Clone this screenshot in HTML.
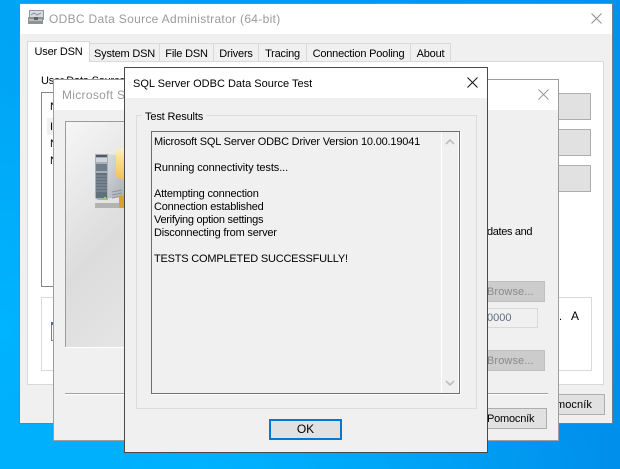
<!DOCTYPE html>
<html><head><meta charset="utf-8">
<style>
html,body{margin:0;padding:0}
body{width:620px;height:469px;overflow:hidden;position:relative;font-family:"Liberation Sans",sans-serif;font-size:11px;letter-spacing:-.2px;color:#000;
background:radial-gradient(ellipse 300px 300px at 0px 330px,#00b4ff 0%,rgba(0,176,255,0) 100%),radial-gradient(ellipse 400px 120px at 200px 469px,#00b2ff 0%,rgba(0,178,255,0) 100%),linear-gradient(100deg,#00a4f4 0%,#0090ec 100%)}
div{position:absolute;box-sizing:border-box}
.t{white-space:nowrap;line-height:13px}
.tab{background:#f0f0f0;border:1px solid #d9d9d9;border-bottom:none;height:18px;top:43px;line-height:20px;text-align:center;white-space:nowrap;color:#000}
.btn{background:#e1e1e1;border:1px solid #adadad;text-align:center;white-space:nowrap}
.cap{font-size:12px}
</style></head><body>

<!-- main window -->
<div style="left:19px;top:3px;width:594px;height:421px;background:#f0f0f0;border:1px solid #6f7f8c;border-top-color:#7a8a96"></div>
<div style="left:20px;top:4px;width:592px;height:30px;background:#fff"></div>
<svg style="position:absolute;left:28px;top:10px" width="17" height="15" viewBox="0 0 17 15"><rect x="1.500" y=".5" width="14" height="9" fill="#d5dbe2" stroke="#8b97a3"/><path d="M3 5l3-2 3 2 4-2" stroke="#8592a0" fill="none"/><rect x="0" y="7" width="15" height="7" fill="#8d9496"/><rect x="1" y="9" width="13" height="2" fill="#b7bcbe"/><rect x="6" y="7" width="4" height="3" fill="#5a6266"/></svg>
<div class="t cap" style="left:49px;top:13px;color:#9b9b9b;letter-spacing:.31px">ODBC Data Source Administrator (64-bit)</div>
<svg style="position:absolute;left:591px;top:13px" width="12" height="12"><path d="M.5.5l10 10M10.500.5l-10 10" stroke="#8e8e8e" stroke-width="1" fill="none"/></svg>

<!-- tabs -->
<div style="left:27px;top:61px;width:577px;height:324px;background:#fff;border:1px solid #d9d9d9"></div>
<div class="tab" style="left:89px;width:71px">System DSN</div>
<div class="tab" style="left:159px;width:55px">File DSN</div>
<div class="tab" style="left:213px;width:46px">Drivers</div>
<div class="tab" style="left:258px;width:49px">Tracing</div>
<div class="tab" style="left:306px;width:105px">Connection Pooling</div>
<div class="tab" style="left:410px;width:41px">About</div>
<div style="left:27px;top:41px;width:63px;height:21px;background:#fff;border:1px solid #d9d9d9;border-bottom:none;text-align:center;line-height:20px;white-space:nowrap">User DSN</div>

<div class="t" style="left:41px;top:75px">User Data Sources:</div>
<div style="left:41px;top:92px;width:30px;height:195px;background:#fff;border:1px solid #828790"></div>
<div class="t" style="left:50px;top:101px">N</div>
<div style="left:47px;top:118px;width:10px;height:17px;background:#f0f0f0"></div>
<div class="t" style="left:50px;top:121px">ID</div>
<div class="t" style="left:50px;top:138px">N</div>
<div class="t" style="left:50px;top:155px">N</div>
<div style="left:41px;top:297px;width:30px;height:74px;background:#fff;border:1px solid #d9d9d9"></div>
<div style="left:51px;top:322px;width:5px;height:19px;background:#fff;border:1px solid #808080;border-right:none"></div>
<div style="left:51px;top:322px;width:4px;height:3px;background:#4a6fa5"></div>

<div class="btn" style="left:540px;top:93px;width:51px;height:27px"></div>
<div class="btn" style="left:540px;top:129px;width:51px;height:27px"></div>
<div class="btn" style="left:540px;top:165px;width:51px;height:27px"></div>
<div style="left:540px;top:297px;width:52px;height:74px;background:#fff;border:1px solid #d9d9d9;border-left:none"></div>
<div class="t" style="left:559px;top:311px">.</div>
<div class="t" style="left:571px;top:310px;font-size:12px">A</div>
<div class="btn" style="left:540px;top:394px;width:65px;height:21px;line-height:21px;text-align:right;padding-right:12px;letter-spacing:.1px">mocník</div>

<!-- middle window -->
<div style="left:53px;top:79px;width:506px;height:362px;background:#f0f0f0;border:1px solid #9d9d9d"></div>
<div style="left:54px;top:80px;width:504px;height:30px;background:#fff"></div>
<div class="t cap" style="left:62px;top:89px;color:#9b9b9b;letter-spacing:.3px">Microsoft SQL</div>
<svg style="position:absolute;left:538px;top:89px" width="12" height="12"><path d="M.5.5l10 10M10.500.5l-10 10" stroke="#9a9a9a" stroke-width="1" fill="none"/></svg>
<div style="left:65px;top:121px;width:70px;height:226px;background:linear-gradient(135deg,#f6f6f6 0%,#dcdcdc 55%,#e6e6e6 100%);border-left:1px solid #9b9b9b;border-top:1px solid #9b9b9b"></div>
<div style="left:65px;top:347px;width:70px;height:1px;background:#fff"></div>
<svg style="position:absolute;left:94px;top:148px" width="32" height="62" viewBox="0 0 32 62">
<defs><linearGradient id="s" x1="0" y1="0" x2="1" y2="1"><stop offset="0" stop-color="#e6e9ec"/><stop offset="1" stop-color="#a9afb3"/></linearGradient>
<linearGradient id="c" x1="0" y1="0" x2="0" y2="1"><stop offset="0" stop-color="#fff0bf"/><stop offset=".4" stop-color="#fbdc8c"/><stop offset="1" stop-color="#f2c158"/></linearGradient></defs>
<path d="M1 6h13l16 2v40l-26 4-3-2z" fill="url(#s)"/>
<path d="M22 6c0-4 4-6 9-6v31c-5 0-9-1-9-4z" fill="url(#c)"/>
<path d="M1 6h13v46H4l-3-2z" fill="#a6b0b8"/>
<rect x="2" y="7" width="11" height="2" fill="#4f5a64"/>
<rect x="2" y="10" width="11" height="4" fill="#cfd5da"/>
<rect x="2" y="16" width="11" height="7" fill="#717d88"/>
<rect x="2" y="25" width="11" height="25" fill="#636f7a"/>
<path d="M2 28h11M2 31h11M2 34h11M2 37h11M2 40h11M2 43h11" stroke="#8a95a0" stroke-width="1" fill="none"/>
<rect x="10" y="49" width="2" height="2" fill="#7fe04a"/>
<path d="M18 50l10-2M18 47l10-2M18 44l10-2" stroke="#8d949a" fill="none"/>
<rect x="1" y="55" width="25" height="5" fill="#b3b3b3"/>
<rect x="25" y="48" width="7" height="12" fill="#d9a032"/>
</svg>
<div style="left:65px;top:393px;width:70px;height:1px;background:#a0a0a0"></div>
<div style="left:65px;top:394px;width:70px;height:1px;background:#fff"></div>
<div style="left:487px;top:393px;width:61px;height:1px;background:#a0a0a0"></div>
<div style="left:487px;top:394px;width:61px;height:1px;background:#fff"></div>
<div class="t" style="left:487px;top:226px;letter-spacing:-.35px">dates and</div>
<div style="left:487px;top:281px;width:58px;height:21px;background:#ccc;border:1px solid #bfbfbf;border-left:none;color:#8a8a8a;line-height:21px;letter-spacing:.1px;white-space:nowrap">Browse...</div>
<div style="left:487px;top:308px;width:51px;height:20px;background:#f0f0f0;border:1px solid #d9d9d9;border-left:none;color:#5f6d80;line-height:18px;letter-spacing:0">0000</div>
<div style="left:487px;top:350px;width:58px;height:21px;background:#ccc;border:1px solid #bfbfbf;border-left:none;color:#8a8a8a;line-height:21px;letter-spacing:.1px;white-space:nowrap">Browse...</div>
<div style="left:487px;top:408px;width:60px;height:21px;background:#e1e1e1;border:1px solid #adadad;border-left:none;line-height:21px;letter-spacing:-.2px;white-space:nowrap">Pomocník</div>

<!-- front window -->
<div style="left:124px;top:67px;width:364px;height:386px;background:#f0f0f0;border:1px solid #4a4a4a"></div>
<div style="left:125px;top:68px;width:362px;height:30px;background:#fff"></div>
<div class="t" style="left:133px;top:78px;letter-spacing:0;font-size:11px">SQL Server ODBC Data Source Test</div>
<svg style="position:absolute;left:467px;top:77px" width="12" height="12"><path d="M.5.5l10 10M10.500.5l-10 10" stroke="#111" stroke-width="1" fill="none"/></svg>

<div style="left:136px;top:115px;width:341px;height:294px;border:1px solid #dcdcdc"></div>
<div class="t" style="left:142px;top:112px;background:#f0f0f0;padding:0 3px;height:11px;line-height:11px;letter-spacing:-.15px">Test Results</div>

<div style="left:151px;top:131px;width:309px;height:263px;background:#f0f0f0;border:1px solid #6e6e6e;box-shadow:1px 1px 0 #fff"></div>
<div style="left:441px;top:132px;width:18px;height:261px;border-left:1px solid #fff;border-right:1px solid #fff"></div>
<svg style="position:absolute;left:445px;top:138px" width="10" height="8"><path d="M1 6l4-4 4 4" stroke="#bdbdbd" stroke-width="1.600" fill="none"/></svg>
<svg style="position:absolute;left:445px;top:379px" width="10" height="8"><path d="M1 2l4 4 4-4" stroke="#bdbdbd" stroke-width="1.600" fill="none"/></svg>

<div class="t" style="left:154px;top:136px;letter-spacing:-.19px">Microsoft SQL Server ODBC Driver Version 10.00.19041</div>
<div class="t" style="left:154px;top:162px;letter-spacing:-.1px">Running connectivity tests...</div>
<div class="t" style="left:154px;top:188px">Attempting connection</div>
<div class="t" style="left:154px;top:201px;letter-spacing:-.22px">Connection established</div>
<div class="t" style="left:154px;top:214px;letter-spacing:-.28px">Verifying option settings</div>
<div class="t" style="left:154px;top:227px">Disconnecting from server</div>
<div class="t" style="left:154px;top:253px">TESTS COMPLETED SUCCESSFULLY!</div>

<div style="left:269px;top:419px;width:73px;height:21px;background:#e1e1e1;border:2px solid #0078d7;text-align:center;line-height:17px;font-size:12px;letter-spacing:0">OK</div>

</body></html>
